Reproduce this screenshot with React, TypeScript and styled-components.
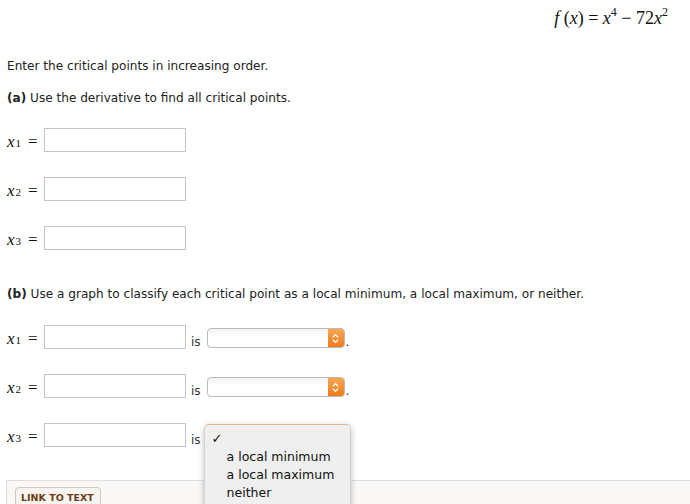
import * as React from 'react'
import styled, { createGlobalStyle } from 'styled-components'

const GlobalStyle = createGlobalStyle`
  html, body {
    margin: 0;
    padding: 0;
    background: #ffffff;
  }
  body {
    font-family: "DejaVu Sans", Verdana, sans-serif;
    font-size: 12px;
    color: #222222;
  }
`

const Page = styled.div`
  position: relative;
  width: 690px;
  height: 504px;
  overflow: hidden;
`

const Formula = styled.div`
  font-family: "Liberation Serif", "Times New Roman", serif;
  font-size: 18px;
  color: #111;
  text-align: right;
  padding: 8px 22px 0 0;
  height: 52px;
  box-sizing: border-box;
  i {
    font-style: italic;
  }
  sup {
    font-size: 12px;
    vertical-align: 8px;
    line-height: 0;
  }
`

const Body = styled.div`
  padding: 0 7px;
`

const Text = styled.p<{ top: number }>`
  margin: ${({ top }) => top}px 0 0 0;
  line-height: 16px;
  font-size: 12.1px;
  b {
    font-weight: bold;
  }
`

const Row = styled.div<{ top: number }>`
  display: flex;
  align-items: center;
  height: 24px;
  margin-top: ${({ top }) => top}px;
`

const Var = styled.span`
  font-family: "Liberation Serif", "Times New Roman", serif;
  font-size: 17px;
  width: 37px;
  color: #111;
  display: flex;
  align-items: baseline;
  margin-top: 3px;
  i {
    font-style: italic;
  }
  sub {
    font-size: 11px;
    vertical-align: -4px;
    line-height: 0;
    margin-left: 1px;
  }
  span {
    margin-left: 7px;
  }
`

const Input = styled.div`
  width: 142px;
  height: 24px;
  box-sizing: border-box;
  border: 1px solid #c4c4c4;
  background: #fff;
`

const Is = styled.span`
  margin: 9px 6px 0 5px;
  color: #333;
`

const SelectWrap = styled.div`
  position: relative;
  display: flex;
  align-items: flex-end;
  margin-top: 2px;
`

const Select = styled.div`
  width: 138px;
  height: 20px;
  box-sizing: border-box;
  border: 1px solid #b9b9b9;
  border-radius: 4px;
  background: linear-gradient(#f2f2f2, #ffffff 40%);
  display: flex;
  justify-content: flex-end;
  overflow: hidden;
`

const Arrow = styled.div`
  width: 16px;
  height: 100%;
  background: linear-gradient(#f8a651, #ed7a1a);
  display: flex;
  align-items: center;
  justify-content: center;
`

const Dot = styled.span`
  margin-left: 1px;
  line-height: 12px;
`

const Menu = styled.div`
  position: absolute;
  left: -3px;
  top: -2px;
  width: 147px;
  height: 90px;
  box-sizing: border-box;
  background: #efefef;
  border: 1px solid #d2d2d2;
  border-top-color: #e6b88f;
  border-radius: 5px;
  box-shadow: 0 2px 6px rgba(0, 0, 0, 0.25);
  padding: 5px 0 0 7px;
  z-index: 2;
`

const Check = styled.div`
  font-size: 13px;
  font-weight: bold;
  line-height: 18px;
  color: #111;
`

const Option = styled.div`
  padding-left: 15px;
  font-size: 12.5px;
  line-height: 18px;
  color: #111;
`

const Footer = styled.div`
  margin: 33px 0 0 6px;
  height: 40px;
  border-top: 1px solid #ddd;
  border-left: 1px solid #ddd;
  background: #faf8f6;
  padding: 6px 0 0 8px;
`

const LinkButton = styled.div`
  display: inline-block;
  height: 22px;
  line-height: 17px;
  box-sizing: border-box;
  padding: 1px 6px 0 5px;
  border: 1px solid #cfc8c1;
  border-radius: 4px;
  background: #f8f5f1;
  color: #6b3b17;
  font-size: 9.5px;
  font-weight: bold;
`

function Chevrons() {
  return (
    <svg width="9" height="11" viewBox="0 0 9 11">
      <path d="M1.8 4.4 L4.5 1.7 L7.2 4.4" fill="none" stroke="#fff" strokeWidth="1.3" />
      <path d="M1.8 6.6 L4.5 9.3 L7.2 6.6" fill="none" stroke="#fff" strokeWidth="1.3" />
    </svg>
  )
}

function Variable({ n }: { n: number }) {
  return (
    <Var>
      <i>x</i>
      <sub>{n}</sub>
      <span>=</span>
    </Var>
  )
}

function Dropdown({ open }: { open?: boolean }) {
  return (
    <SelectWrap>
      <Select>
        <Arrow>
          <Chevrons />
        </Arrow>
      </Select>
      <Dot>.</Dot>
      {open && (
        <Menu>
          <Check>✓</Check>
          <Option>a local minimum</Option>
          <Option>a local maximum</Option>
          <Option>neither</Option>
        </Menu>
      )}
    </SelectWrap>
  )
}

export default function App() {
  return (
    <Page>
      <GlobalStyle />
      <Formula>
        <i>f</i> (<i>x</i>) = <i>x</i>
        <sup>4</sup> − 72<i>x</i>
        <sup>2</sup>
      </Formula>
      <Body>
        <Text top={6}>Enter the critical points in increasing order.</Text>
        <Text top={16}>
          <b>(a)</b> Use the derivative to find all critical points.
        </Text>
        {[1, 2, 3].map((n, i) => (
          <Row key={n} top={i === 0 ? 22 : 25}>
            <Variable n={n} />
            <Input />
          </Row>
        ))}
        <Text top={36}>
          <b>(b)</b> Use a graph to classify each critical point as a local
          minimum, a local maximum, or neither.
        </Text>
        {[1, 2, 3].map((n, i) => (
          <Row key={n} top={i === 0 ? 23 : 25}>
            <Variable n={n} />
            <Input />
            <Is>is</Is>
            <Dropdown open={n === 3} />
          </Row>
        ))}
      </Body>
      <Footer>
        <LinkButton>LINK TO TEXT</LinkButton>
      </Footer>
    </Page>
  )
}
